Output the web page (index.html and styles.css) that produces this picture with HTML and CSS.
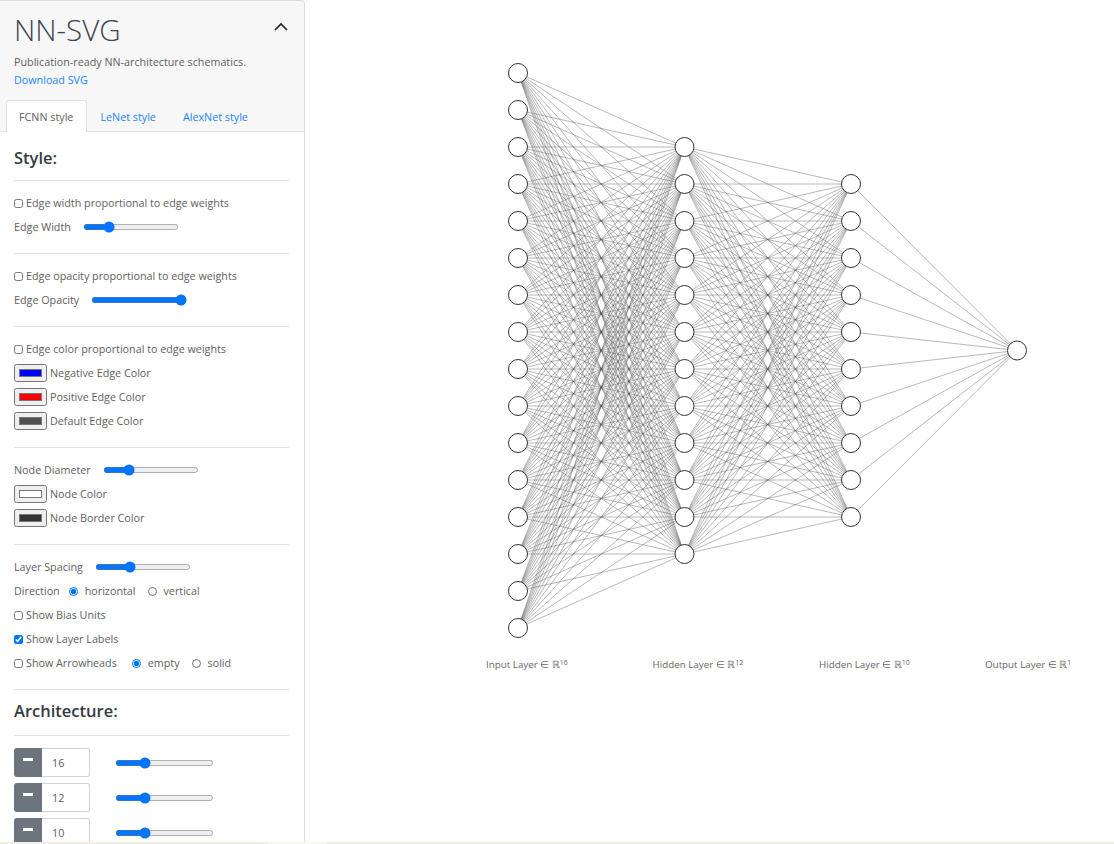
FILE: index.html
```html
<!DOCTYPE html>
<html lang="en">
<head>
    <meta charset="UTF-8">
    <title>NN-SVG</title>
    <link rel="stylesheet" href="styles.css">
</head>
<body>
    <div class="page">
        <div class="panel">
            <div class="panel-head">
                <div class="title-row">
                    <h1>NN-SVG</h1>
                    <svg class="chevron" width="16" height="10" viewBox="0 0 16 10"><path d="M2 8 L8 2 L14 8" /></svg>
                </div>
                <p class="tagline">Publication-ready NN-architecture schematics.</p>
                <a class="download" href="#">Download SVG</a>
                <div class="tabs">
                    <a href="#" class="tab active">FCNN style</a>
                    <a href="#" class="tab">LeNet style</a>
                    <a href="#" class="tab">AlexNet style</a>
                </div>
            </div>
            <div class="panel-body">
                <h2 class="heading">Style:</h2>

                <div class="group">
                    <label class="row"><input type="checkbox">Edge width proportional to edge weights</label>
                    <div class="row"><span class="field">Edge Width</span><input type="range" class="slider" value="24"></div>
                </div>

                <div class="group">
                    <label class="row"><input type="checkbox">Edge opacity proportional to edge weights</label>
                    <div class="row"><span class="field">Edge Opacity</span><input type="range" class="slider" value="100"></div>
                </div>

                <div class="group">
                    <label class="row"><input type="checkbox">Edge color proportional to edge weights</label>
                    <label class="row"><input type="color" value="#0000ff">Negative Edge Color</label>
                    <label class="row"><input type="color" value="#ff0000">Positive Edge Color</label>
                    <label class="row"><input type="color" value="#505050">Default Edge Color</label>
                </div>

                <div class="group">
                    <div class="row"><span class="field">Node Diameter</span><input type="range" class="slider" value="24"></div>
                    <label class="row"><input type="color" value="#ffffff">Node Color</label>
                    <label class="row"><input type="color" value="#333333">Node Border Color</label>
                </div>

                <div class="group">
                    <div class="row"><span class="field">Layer Spacing</span><input type="range" class="slider" value="35"></div>
                    <div class="row">
                        <span class="field narrow-gap">Direction</span>
                        <label class="choice"><input type="radio" name="direction" checked>horizontal</label>
                        <label class="choice"><input type="radio" name="direction">vertical</label>
                    </div>
                    <label class="row"><input type="checkbox">Show Bias Units</label>
                    <label class="row"><input type="checkbox" checked>Show Layer Labels</label>
                    <div class="row">
                        <label class="field wide-gap"><input type="checkbox">Show Arrowheads</label>
                        <label class="choice"><input type="radio" name="arrow" checked>empty</label>
                        <label class="choice"><input type="radio" name="arrow">solid</label>
                    </div>
                </div>

                <h2 class="heading second">Architecture:</h2>

                <div class="layers">
                    <div class="layer">
                        <button class="minus"><span></span></button>
                        <input type="text" class="count" value="16">
                        <input type="range" class="slider wide" value="28">
                    </div>
                    <div class="layer">
                        <button class="minus"><span></span></button>
                        <input type="text" class="count" value="12">
                        <input type="range" class="slider wide" value="28">
                    </div>
                    <div class="layer">
                        <button class="minus"><span></span></button>
                        <input type="text" class="count" value="10">
                        <input type="range" class="slider wide" value="28">
                    </div>
                </div>
            </div>
        </div>

        <div class="canvas">
            <svg id="graph" width="809" height="842" viewBox="305 0 809 842"></svg>
        </div>
    </div>
    <div class="strip"><span class="strip-a"></span><span class="strip-b"></span><span class="strip-c"></span></div>

    <script src="script.js"></script>
</body>
</html>
```

FILE: styles.css
```css
* {
    box-sizing: border-box;
}
html, body {
    margin: 0;
    height: 100%;
    overflow: hidden;
}
body {
    font-family: "Open Sans", sans-serif;
    font-size: 10.75px;
    color: #606060;
    background: white;
    display: flex;
    flex-direction: column;
}
.page {
    flex: 1;
    min-height: 0;
    display: flex;
    overflow: hidden;
}
.panel {
    width: 305px;
    flex: none;
    border: 1px solid #dcdcdc;
    border-left: none;
    border-bottom: none;
    border-top-right-radius: 4px;
    overflow: hidden;
}
.panel-head {
    background: #f7f7f7;
    height: 131px;
    padding: 0 0 0 14px;
    position: relative;
    border-bottom: 1px solid #dee2e6;
}
.title-row {
    display: flex;
    justify-content: space-between;
    align-items: center;
    height: 48px;
    padding-right: 15px;
}
h1 {
    margin: 8px 0 0;
    font-size: 29.5px;
    font-weight: 300;
    color: #3f454b;
}
.chevron {
    margin-top: 4px;
}
.chevron path {
    fill: none;
    stroke: #222;
    stroke-width: 1.6;
}
.tagline {
    margin: 4px 0 0;
    line-height: 18px;
}
.download {
    display: block;
    line-height: 18px;
    color: #1a85ff;
    text-decoration: none;
}
.tabs {
    position: absolute;
    left: 6px;
    bottom: -1px;
    display: flex;
}
.tab {
    height: 32px;
    line-height: 32px;
    padding: 0 12px;
    margin-right: 1px;
    color: #1a85ff;
    text-decoration: none;
    border: 1px solid transparent;
    border-bottom: none;
    border-radius: 3px 3px 0 0;
}
.tab.active {
    padding-right: 13px;
    margin-right: 0;
    color: #606060;
    background: white;
    border-color: #dee2e6;
}
.panel-body {
    padding: 0 15px 0 14px;
}
.heading {
    margin: 0;
    height: 49px;
    line-height: 51px;
    font-size: 16.5px;
    font-weight: 600;
    color: #343a40;
    border-bottom: 1px solid #e2e2e2;
}
.heading.second {
    height: 46px;
    line-height: 41px;
}
.group {
    padding: 10px 0 14px;
    border-bottom: 1px solid #e2e2e2;
}
.row {
    display: flex;
    align-items: center;
    height: 24px;
}
.field {
    display: flex;
    align-items: center;
    margin-right: 12px;
}
.field.narrow-gap {
    margin-right: 9px;
}
.field.wide-gap {
    margin-right: 15px;
}
.choice {
    display: flex;
    align-items: center;
    margin-right: 12px;
}
input[type="checkbox"] {
    width: 9px;
    height: 9px;
    margin: 0 3px 0 0;
}
input[type="radio"] {
    width: 9px;
    height: 9px;
    margin: 0 7px 0 0;
}
input[type="color"] {
    width: 33px;
    height: 18px;
    margin: 0 3px 0 0;
    padding: 1px 2px;
}
input[type="color"]::-webkit-color-swatch-wrapper {
    padding: 3px 2px;
}
.slider {
    zoom: 0.75;
    width: 128px;
    margin: 0;
    accent-color: #0075ff;
}
.slider.wide {
    width: 132px;
    margin: 0 0 0 33px;
}
.layers {
    padding-top: 12px;
}
.layer {
    display: flex;
    align-items: center;
    height: 29px;
    margin-bottom: 6px;
}
.minus {
    width: 28px;
    height: 29px;
    padding: 0 0 7px;
    background: #6c757d;
    border: none;
    border-radius: 3px 0 0 3px;
    display: flex;
    align-items: center;
    justify-content: center;
}
.minus span {
    width: 10px;
    height: 3px;
    background: white;
}
.count {
    width: 48px;
    height: 29px;
    padding: 0 0 0 10px;
    border: 1px solid #ced4da;
    border-left: none;
    border-radius: 0 3px 3px 0;
    font: inherit;
    color: #606060;
}
.canvas {
    flex: 1;
}
.canvas svg {
    display: block;
}
.edge {
    stroke: #505050;
    stroke-width: 0.8;
    stroke-opacity: 0.5;
}
.node {
    fill: white;
    stroke: #333;
    stroke-width: 1;
}
.label {
    font-family: "Open Sans", sans-serif;
    font-size: 9.8px;
    fill: #666;
}
.label .power {
    font-size: 7px;
}
.strip {
    height: 2px;
    flex: none;
    display: flex;
}
.strip-a {
    width: 268px;
    background: #f4efe6;
}
.strip-b {
    width: 58px;
    background: #f8f8f3;
}
.strip-c {
    flex: 1;
    background: #efece0;
}
```

FILE: script.js
```js
const SVG_NS = 'http://www.w3.org/2000/svg';
const graph = document.getElementById('graph');

const layers = [
    { size: 16, x: 518, name: 'Input Layer' },
    { size: 12, x: 684.5, name: 'Hidden Layer' },
    { size: 10, x: 851, name: 'Hidden Layer' },
    { size: 1, x: 1017, name: 'Output Layer' }
];
const spacing = 37;
const middle = 350.5;
const radius = 9.5;

function make(tag, attrs) {
    const el = document.createElementNS(SVG_NS, tag);
    for (const key in attrs) el.setAttribute(key, attrs[key]);
    return el;
}

function nodeY(layer, i) {
    return middle + (i - (layer.size - 1) / 2) * spacing;
}

// edges first so the nodes sit on top
layers.slice(0, -1).forEach((layer, l) => {
    const next = layers[l + 1];
    for (let i = 0; i < layer.size; i++) {
        for (let j = 0; j < next.size; j++) {
            graph.appendChild(make('line', {
                class: 'edge',
                x1: layer.x, y1: nodeY(layer, i),
                x2: next.x, y2: nodeY(next, j)
            }));
        }
    }
});

layers.forEach(layer => {
    for (let i = 0; i < layer.size; i++) {
        graph.appendChild(make('circle', {
            class: 'node', cx: layer.x, cy: nodeY(layer, i), r: radius
        }));
    }

    const label = make('text', { class: 'label', x: layer.x - 32, y: 668 });
    label.textContent = layer.name + ' \u2208 \u211D';
    const power = make('tspan', { class: 'power', dy: -3 });
    power.textContent = layer.size;
    label.appendChild(power);
    graph.appendChild(label);
});
```
